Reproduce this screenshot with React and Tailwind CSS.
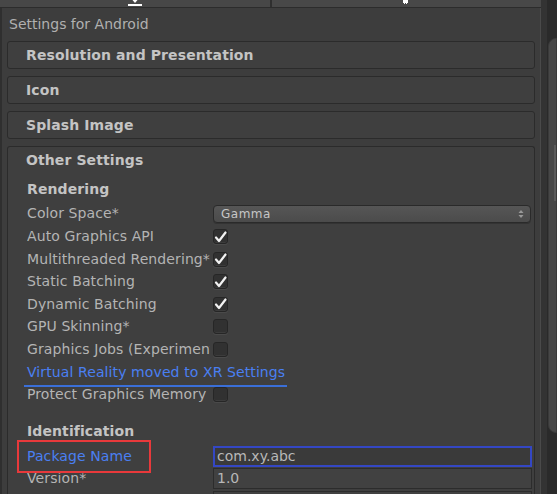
import React from "react";

const FONT = { fontFamily: '"DejaVu Sans", "Liberation Sans", sans-serif' };

function Check({ on }) {
  return (
    <div className="w-[15px] h-[15px] rounded-[3px] bg-[#313131] border border-[#262626] shadow-[inset_0_-1px_0_#3c3c3c,0_1px_0_#4a4a4a] flex items-center justify-center">
      {on && (
        <svg width="13" height="12" viewBox="0 0 13 12">
          <path d="M2 6.5 L5 10 L11.5 1.5" fill="none" stroke="#f2f2f2" strokeWidth="2.2" strokeLinecap="round" strokeLinejoin="round" />
        </svg>
      )}
    </div>
  );
}

function Row({ label, children, labelClass = "text-[#b4b4b4]" }) {
  return (
    <div className="h-[22.6px] flex items-center">
      <div className="w-[186px] shrink-0 pr-[3px]">
        <div className={"overflow-hidden whitespace-nowrap text-[14px] tracking-[0.1px] " + labelClass}>{label}</div>
      </div>
      <div className="flex-1 flex items-center">{children}</div>
    </div>
  );
}

function Foldout({ title }) {
  return (
    <div className="h-[28px] rounded-[3px] border border-[#2b2b2b] bg-[#3f3f3f] flex items-center pl-[18px] text-[14px] font-bold text-[#c4c4c4] tracking-[0.1px]">
      {title}
    </div>
  );
}

export default function App() {
  return (
    <div className="w-[557px] h-[494px] overflow-hidden bg-[#2a2a2a] flex" style={FONT}>
      <div className="w-[541px] shrink-0 flex flex-col">
        {/* tab bar */}
        <div className="h-[8px] shrink-0 flex border-b border-[#2c2c2c]">
          <div className="w-[270px] bg-[#474747] relative overflow-hidden">
            <div className="absolute left-[130px] top-[-3px] w-0 h-0 border-l-[5px] border-r-[5px] border-t-[6px] border-l-transparent border-r-transparent border-t-white" />
            <div className="absolute left-[128px] top-[4px] w-[14px] h-[2px] bg-white" />
          </div>
          <div className="w-[2px] bg-[#2f2f2f]" />
          <div className="flex-1 bg-[#484848] relative overflow-hidden">
            <div className="absolute left-[131px] top-0 w-[5px] h-[3px] bg-white" />
            <div className="absolute left-[132px] top-[3px] w-[1px] h-[1px] bg-white" />
            <div className="absolute left-[134px] top-[3px] w-[1px] h-[1px] bg-white" />
          </div>
        </div>
        {/* panel */}
        <div className="flex-1 bg-[#3d3d3d] border-l-[2px] border-[#2f2f2f] border-r border-r-[#4a4a4a] flex flex-col pl-[5px] pr-[5px] overflow-hidden">
          <div className="h-[33px] shrink-0 flex items-center pl-[2px] text-[14px] text-[#b0b0b0]">Settings for Android</div>
          <div className="flex flex-col gap-[7px]">
            <Foldout title="Resolution and Presentation" />
            <Foldout title="Icon" />
            <Foldout title="Splash Image" />
            <div className="rounded-t-[3px] border border-b-0 border-[#2b2b2b] bg-[#3f3f3f] pl-[19px] pr-[2px] h-[400px]">
              <div className="h-[27px] flex items-center -ml-[1px] text-[14px] font-bold text-[#c4c4c4] tracking-[0.1px]">Other Settings</div>
              <div className="h-[22px] mt-[4px] flex items-center text-[14px] font-bold text-[#c4c4c4] tracking-[0.1px]">Rendering</div>
              <div className="pt-[2.7px]">
                <Row label="Color Space*">
                  <div className="w-[318px] h-[18px] rounded-[4px] border border-[#2a2a2a] bg-[linear-gradient(#565656,#4b4b4b)] shadow-[0_1px_0_#333] flex items-center pl-[7px] pr-[6px] justify-between">
                    <span className="text-[12px] text-[#c6c6c6] tracking-[0.5px]">Gamma</span>
                    <svg width="6" height="10" viewBox="0 0 6 10">
                      <path d="M0.5 4 L3 1 L5.5 4 Z" fill="#9a9a9a" />
                      <path d="M0.5 6 L3 9 L5.5 6 Z" fill="#9a9a9a" />
                    </svg>
                  </div>
                </Row>
                <Row label="Auto Graphics API"><Check on /></Row>
                <Row label="Multithreaded Rendering*"><Check on /></Row>
                <Row label="Static Batching"><Check on /></Row>
                <Row label="Dynamic Batching"><Check on /></Row>
                <Row label="GPU Skinning*"><Check /></Row>
                <Row label="Graphics Jobs (Experimental)*"><Check /></Row>
                <div className="h-[22.6px] flex items-center">
                  <span className="relative text-[14px] text-[#4a7ff2] whitespace-nowrap tracking-[0.1px]">
                    Virtual Reality moved to XR Settings
                    <span className="absolute left-[-3px] right-[-2px] bottom-[-4px] h-[2px] bg-[#3a6fd8]" />
                  </span>
                </div>
                <Row label="Protect Graphics Memory"><Check /></Row>
              </div>
              <div className="h-[22px] mt-[14px] flex items-center text-[14px] font-bold text-[#c4c4c4] tracking-[0.1px]">Identification</div>
              <div className="pt-[2.7px]">
                <div className="h-[22.6px] flex items-center">
                  <div className="w-[186px] shrink-0 text-[14px] text-[#4a7ff2] whitespace-nowrap tracking-[0.1px]">
                    <span className="relative">
                      Package Name
                      <span className="absolute left-[-10px] top-[-8px] w-[134px] h-[33px] border-2 border-[#e8393b]" />
                    </span>
                  </div>
                  <div className="w-[319px] h-[21px] border-2 border-[#3447c4] bg-[#3a3a3a] flex items-center pl-[2px] text-[14px] text-[#b8b8b8]">com.xy.abc</div>
                </div>
                <Row label="Version*">
                  <div className="w-[319px] h-[21px] border border-[#2c2c2c] bg-[#414141] flex items-center pl-[3px] text-[14px] text-[#b8b8b8]">1.0</div>
                </Row>
                <Row label="">
                  <div className="w-[319px] h-[21px] border border-[#2c2c2c] bg-[#414141]" />
                </Row>
              </div>
            </div>
          </div>
        </div>
      </div>
      {/* right strip + scrollbar */}
      <div className="w-[6px] shrink-0 bg-[#333333]" />
      <div className="flex-1 bg-[#2a2a2a] pt-[38px] pl-[1px]">
        <div className="h-[395px] rounded-tl-[8px] rounded-bl-[8px] bg-[#474747] border border-[#3a3a3a] relative">
          <div className="absolute right-0 top-[106px] w-[2px] h-[56px] bg-[#5a5a5a]" />
        </div>
      </div>
    </div>
  );
}
